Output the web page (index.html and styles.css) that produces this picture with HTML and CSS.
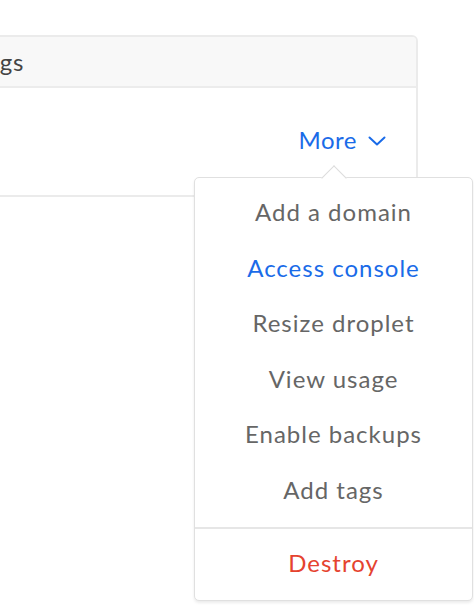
FILE: index.html
```html
<!DOCTYPE html>
<html>
<head>
<meta charset="utf-8">
<link rel="stylesheet" href="styles.css">
</head>
<body>
<div class="page">
  <div class="card">
    <div class="card-head"><span class="title">Settings</span></div>
    <div class="card-body">
      <a class="more">More
        <svg class="chev" width="18" height="10" viewBox="0 0 18 10"><polyline points="1.5,1.5 9,8.5 16.5,1.5" fill="none" stroke="#1a6be8" stroke-width="2" stroke-linecap="round" stroke-linejoin="round"/></svg>
      </a>
    </div>
  </div>
  <div class="menu">
    <span class="caret"></span>
    <ul class="group">
      <li class="item">Add a domain</li>
      <li class="item active">Access console</li>
      <li class="item">Resize droplet</li>
      <li class="item">View usage</li>
      <li class="item">Enable backups</li>
      <li class="item">Add tags</li>
    </ul>
    <ul class="group danger-group">
      <li class="item danger">Destroy</li>
    </ul>
  </div>
</div>
</body>
</html>
```

FILE: styles.css
```css
* { box-sizing: border-box; }
html, body { margin: 0; padding: 0; background: #fff; }
body { font-family: "Lato", "Noto Sans", sans-serif; width: 474px; height: 610px; overflow: hidden; }
.page { position: relative; height: 610px; padding-top: 35px; }
.card {
  margin-left: -140px;
  width: 558px;
  border: 2px solid #ebebeb;
  border-radius: 6px;
  overflow: hidden;
}
.card-head {
  height: 51px;
  background: #f8f8f8;
  border-bottom: 2px solid #ececec;
  display: flex;
  align-items: center;
  padding-left: 71px;
}
.title { font-size: 24px; color: #444; letter-spacing: 0.8px; }
.card-body {
  height: 107px;
  display: flex;
  justify-content: flex-end;
  align-items: flex-start;
  padding: 37px 30px 0 0;
}
.more {
  display: flex;
  align-items: center;
  gap: 11px;
  font-size: 24px;
  letter-spacing: 0.5px;
  color: #1a6be8;
}
.chev { margin-top: 2px; }
.menu {
  position: absolute;
  left: 194px;
  top: 177px;
  width: 279px;
  height: 424px;
  background: #fff;
  border: 1px solid #e0e0e0;
  border-radius: 5px;
  box-shadow: 0 2px 3px rgba(0,0,0,0.08);
}
.caret {
  position: absolute;
  left: 130px;
  top: -9px;
  width: 18px;
  height: 18px;
  background: #fff;
  border-top: 1px solid #dcdcdc;
  border-left: 1px solid #dcdcdc;
  transform: rotate(45deg);
}
.group { list-style: none; margin: 0; padding: 6px 0 10px; position: relative; }
.danger-group { border-top: 2px solid #e6e6e6; }
.item {
  height: 55.5px;
  display: flex;
  align-items: center;
  justify-content: center;
  font-size: 24px;
  letter-spacing: 1px;
  color: #666;
}
.item.active { color: #1a6be8; }
.item.danger { color: #e5432f; }
```
